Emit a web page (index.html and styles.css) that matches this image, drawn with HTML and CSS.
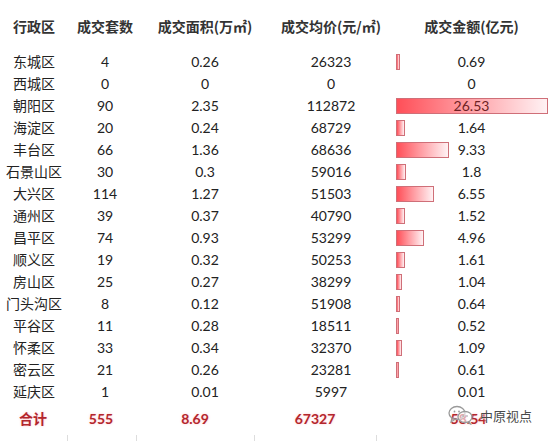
FILE: index.html
```html
<html>
  <head>
    <meta charset="utf-8">
    <link rel="stylesheet" href="styles.css">
  </head>
  <body>
    <div class="sheet">
      <table class="deals">
        <colgroup>
          <col class="c1"><col class="c2"><col class="c3"><col class="c4"><col class="c5">
        </colgroup>
        <thead>
          <tr>
            <th>行政区</th>
            <th>成交套数</th>
            <th>成交面积(万㎡)</th>
            <th>成交均价(元/㎡)</th>
            <th>成交金额(亿元)</th>
          </tr>
        </thead>
        <tbody id="rows"></tbody>
        <tfoot>
          <tr class="total">
            <td class="t1">合计</td>
            <td class="t2">555</td>
            <td class="t3">8.69</td>
            <td class="t4">67327</td>
            <td class="t5">58.54</td>
          </tr>
        </tfoot>
      </table>

      <div class="ticks">
        <span class="k1"></span><span class="k2"></span><span class="k3"></span><span class="k4"></span>
      </div>

      <!-- watermark sits on top of the total row -->
      <div class="mark">
        <svg width="26" height="20" viewBox="0 0 26 20">
          <ellipse cx="9" cy="8" rx="8" ry="6.5" fill="none" stroke="#9a9a9a" stroke-width="1.3"/>
          <path d="M4 13 L3 17 L7.5 14" fill="none" stroke="#9a9a9a" stroke-width="1.2"/>
          <ellipse cx="17" cy="12" rx="7" ry="5.5" fill="rgba(255,255,255,0.6)" stroke="#9a9a9a" stroke-width="1.3"/>
          <path d="M21 16.5 L22.5 19 L19 17.2" fill="none" stroke="#9a9a9a" stroke-width="1.2"/>
          <circle cx="6.5" cy="6.5" r="0.9" fill="#9a9a9a"/>
          <circle cx="11" cy="6.5" r="0.9" fill="#9a9a9a"/>
          <circle cx="15" cy="11" r="0.8" fill="#9a9a9a"/>
          <circle cx="19" cy="11" r="0.8" fill="#9a9a9a"/>
        </svg>
        <span>中原视点</span>
      </div>
    </div>

    <script>
      // district, units, area, avg price, amount
      var data = [
        ["东城区", "4", "0.26", "26323", 0.69],
        ["西城区", "0", "0", "0", 0],
        ["朝阳区", "90", "2.35", "112872", 26.53],
        ["海淀区", "20", "0.24", "68729", 1.64],
        ["丰台区", "66", "1.36", "68636", 9.33],
        ["石景山区", "30", "0.3", "59016", 1.8],
        ["大兴区", "114", "1.27", "51503", 6.55],
        ["通州区", "39", "0.37", "40790", 1.52],
        ["昌平区", "74", "0.93", "53299", 4.96],
        ["顺义区", "19", "0.32", "50253", 1.61],
        ["房山区", "25", "0.27", "38299", 1.04],
        ["门头沟区", "8", "0.12", "51908", 0.64],
        ["平谷区", "11", "0.28", "18511", 0.52],
        ["怀柔区", "33", "0.34", "32370", 1.09],
        ["密云区", "21", "0.26", "23281", 0.61],
        ["延庆区", "1", "0.01", "5997", 0.01]
      ];
      var maxAmount = 26.53;
      var maxBar = 152;

      var body = document.getElementById("rows");
      for (let i = 0; i < data.length; i++) {
        var row = document.createElement("tr");
        for (let j = 0; j < 4; j++) {
          var cell = document.createElement("td");
          cell.textContent = data[i][j];
          row.appendChild(cell);
        }
        var amt = document.createElement("td");
        var wrap = document.createElement("div");
        wrap.className = "amt";
        var w = Math.round(data[i][4] / maxAmount * maxBar);
        if (w >= 2) {
          var bar = document.createElement("span");
          bar.className = "bar";
          bar.style.width = w + "px";
          wrap.appendChild(bar);
        }
        var val = document.createElement("span");
        val.className = "val" + (data[i][4] == maxAmount ? " top" : "");
        val.textContent = data[i][4];
        wrap.appendChild(val);
        amt.appendChild(wrap);
        row.appendChild(amt);
        body.appendChild(row);
      }
    </script>
  </body>
</html>
```

FILE: styles.css
```css
body {
  margin: 0;
  background: #fff;
  font-family: Lato, "Noto Sans CJK SC", sans-serif;
  color: #222;
}

.sheet {
  position: relative;
  width: 549px;
  height: 441px;
  overflow: hidden;
}

.deals {
  width: 549px;
  table-layout: fixed;
  border-collapse: collapse;
}

.c1 { width: 68px; }
.c2 { width: 74px; }
.c3 { width: 126px; }
.c4 { width: 126px; }
.c5 { width: 155px; }

.deals th {
  height: 51px;
  padding: 0;
  font-family: "Noto Sans CJK SC", sans-serif;
  font-size: 14px;
  font-weight: bold;
  color: #333;
  text-align: center;
  vertical-align: middle;
}

.deals td {
  height: 22px;
  padding: 0;
  font-size: 14px;
  text-align: center;
  vertical-align: middle;
  line-height: 22px;
  white-space: nowrap;
}

.amt {
  display: grid;
  height: 22px;
  align-items: center;
}

.bar, .val {
  grid-area: 1 / 1;
}

.bar {
  justify-self: start;
  margin-left: 2px;
  height: 16px;
  box-sizing: border-box;
  border: 1px solid #cf6f78;
  background: linear-gradient(to right, #ff4f58, #ff9aa0 45%, #fff2f4);
}

.val {
  position: relative;
  text-align: center;
}

.val.top {
  color: #6e1f24;
}

.total td {
  height: 32px;
  font-weight: bold;
  color: #b3262d;
  text-shadow: 0 0 3px #ffd0d4, 0 0 1px #ffe0e2;
  font-size: 14px;
}

.total .t1 { padding-right: 2px; }
.total .t2 { padding-right: 8px; }
.total .t3 { padding-right: 20px; }
.total .t4 { padding-right: 32px; }
.total .t5 { padding-right: 6px; }

.ticks {
  display: flex;
  height: 6px;
}

.ticks span {
  border-right: 1px solid #ddd;
}

.k1 { width: 67px; }
.k2 { width: 68px; }
.k3 { width: 117px; }
.k4 { width: 121px; }

.mark {
  position: absolute;
  left: 448px;
  top: 405px;
  display: flex;
  align-items: center;
  gap: 6px;
}

.mark span {
  font-family: "Noto Sans CJK SC", sans-serif;
  font-size: 13px;
  color: #4a4a4a;
  text-shadow: 0 0 2px #fff, 0 0 2px #fff;
}
```
